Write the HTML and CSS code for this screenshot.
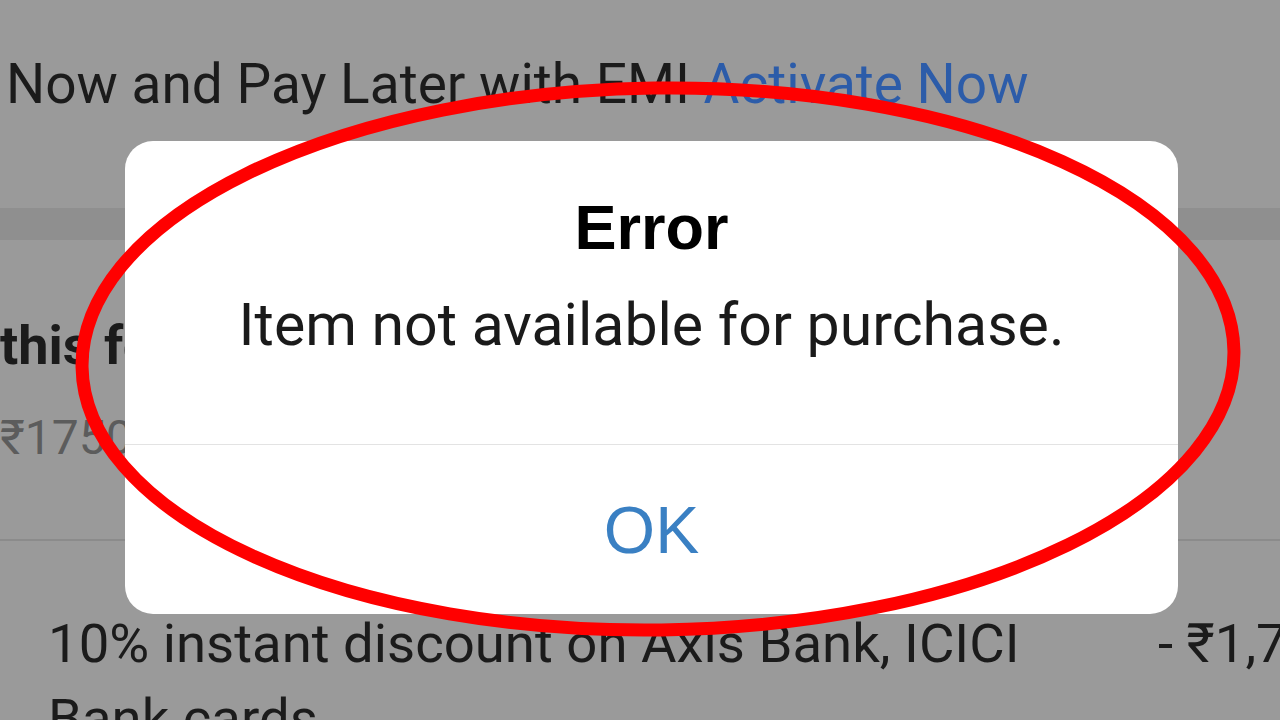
FILE: index.html
```html
<!DOCTYPE html>
<html lang="en">
<head>
  <meta charset="UTF-8">
  <title>Error - Item not available</title>
  <link rel="stylesheet" href="styles.css">
</head>
<body>
<div class="screen">
  <p class="emi-line">Now and Pay Later with EMI <span class="link">Activate Now</span></p>
  <div class="band"></div>
  <h2 class="offer-title">this festive season</h2>
  <p class="offer-price">&#8377;1750</p>
  <div class="rule"></div>
  <div class="discount">
    <span class="discount-text">10% instant discount on Axis Bank, ICICI Bank cards</span>
    <span class="discount-amount">- &#8377;1,750</span>
  </div>
</div>

<div class="modal-layer">
  <div class="dialog">
    <div class="dialog-body">
      <h1 class="dialog-title">Error</h1>
      <p class="dialog-message">Item not available for purchase.</p>
    </div>
    <button class="dialog-btn">OK</button>
  </div>
</div>

<svg class="annotation" width="1280" height="720" viewBox="0 0 1280 720">
  <ellipse cx="658" cy="359" rx="576" ry="271" transform="rotate(-0.8 658 359)"
           fill="none" stroke="#ff0000" stroke-width="13" />
</svg>
</body>
</html>
```

FILE: styles.css
```css
html, body {
  margin: 0;
  padding: 0;
  width: 1280px;
  height: 720px;
  overflow: hidden;
}
body {
  background: #9a9a9a;
  font-family: Roboto, "Noto Sans", sans-serif;
  color: #1b1b1b;
  position: relative;
}
.screen {
  padding-top: 52px;
}
.emi-line {
  margin: 0;
  padding-left: 6px;
  font-size: 55px;
  line-height: 64px;
  white-space: nowrap;
}
.link {
  color: #2c5ca9;
}
.band {
  margin-top: 92px;
  height: 32px;
  background: #8f8f8f;
}
.offer-title {
  margin: 74px 0 0;
  font-size: 54px;
  font-weight: 700;
  line-height: 64px;
  white-space: nowrap;
}
.offer-price {
  margin: 32px 0 0;
  font-size: 48px;
  line-height: 56px;
  color: #5c5c5c;
}
.rule {
  margin-top: 73px;
  height: 2px;
  background: #8b8b8b;
}
.discount {
  margin-top: 65px;
  padding-left: 48px;
  display: grid;
  grid-template-columns: 1060px auto;
  column-gap: 50px;
  font-size: 54.5px;
  line-height: 75px;
}
.discount-amount {
  white-space: nowrap;
}

/* modal */
.modal-layer {
  position: absolute;
  inset: 0;
  display: flex;
  justify-content: center;
  align-items: flex-start;
  padding: 141px 0 0 23px;
}
.dialog {
  width: 1053px;
  background: #ffffff;
  border-radius: 28px;
  overflow: hidden;
  display: flex;
  flex-direction: column;
}
.dialog-body {
  height: 304px;
  box-sizing: border-box;
  padding-top: 50px;
  text-align: center;
  border-bottom: 1px solid #e3e3e3;
}
.dialog-title {
  margin: 0;
  font-family: "Liberation Sans", Arial, sans-serif;
  font-weight: 700;
  font-size: 63px;
  line-height: 72px;
  color: #000;
}
.dialog-message {
  margin: 28px 0 0;
  font-size: 59px;
  line-height: 68px;
  color: #1a1a1a;
}
.dialog-btn {
  height: 169px;
  border: none;
  background: none;
  padding: 0;
  font-family: "Liberation Sans", Arial, sans-serif;
  font-size: 66px;
  color: #3a80c3;
  cursor: pointer;
}

/* hand-drawn highlight */
.annotation {
  position: absolute;
  top: 0;
  left: 0;
  pointer-events: none;
}
```
